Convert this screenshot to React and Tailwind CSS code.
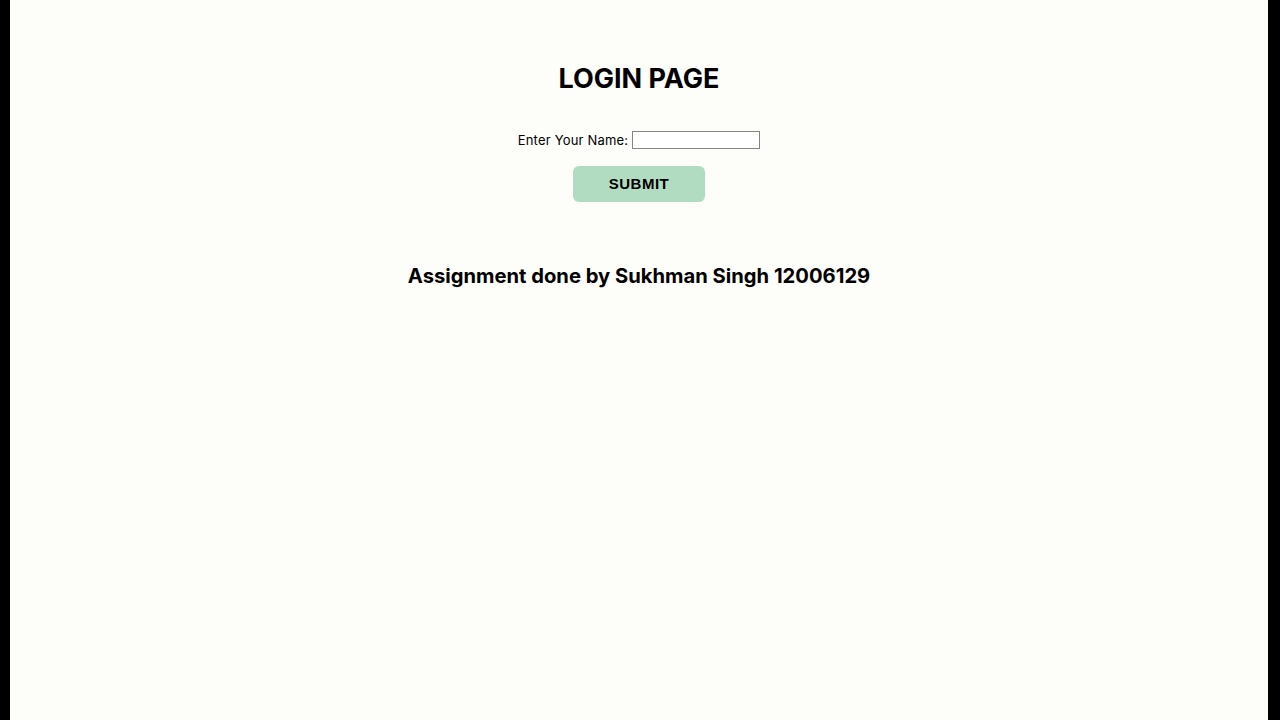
export default function App() {
  return (
    <div className="flex h-[720px] w-[1280px] bg-black" style={{ fontFamily: "Inter, 'Noto Sans', sans-serif" }}>
      <div className="ml-[10px] w-[1258px] h-full bg-[#fdfdf9] flex flex-col items-center text-black">
        <h1 className="mt-[63px] text-[27px] leading-[32px] font-bold">LOGIN PAGE</h1>
        <div className="mt-[36px] flex items-center text-[13px] leading-[18px]">
          <span className="tracking-[0.2px]">Enter Your Name:</span>
          <input type="text" className="ml-[4px] w-[128px] h-[18px] border border-[#858585] bg-white" />
        </div>
        <button className="mt-[17px] w-[132px] h-[36px] rounded-[6px] bg-[#b2dcc2] text-[15px] font-bold tracking-[0.5px]" style={{ fontFamily: "'Liberation Sans', Arial, sans-serif" }}>SUBMIT</button>
        <p className="mt-[62px] text-[20.2px] leading-[24px] font-bold">Assignment done by Sukhman Singh 12006129</p>
      </div>
    </div>
  );
}
